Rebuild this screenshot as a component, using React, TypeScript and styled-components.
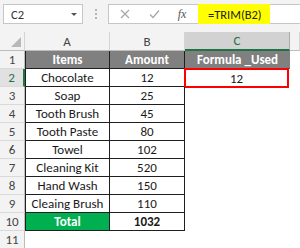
import React from 'react'
import styled, { createGlobalStyle, css } from 'styled-components'

const GlobalStyle = createGlobalStyle`
  html, body {
    margin: 0;
    padding: 0;
    background: #ffffff;
  }
  body {
    font-family: Carlito, Lato, 'Liberation Sans', sans-serif;
  }
`

const Page = styled.div`
  width: 300px;
  height: 248px;
  overflow: hidden;
  background: #ffffff;
`

const Toolbar = styled.div`
  display: flex;
  align-items: flex-start;
  height: 32px;
  padding: 4px 0 0 3px;
  box-sizing: border-box;
  background: #f3f3f3;
`

const NameBox = styled.div`
  display: flex;
  align-items: center;
  justify-content: space-between;
  width: 80px;
  height: 20px;
  padding: 0 5px 0 7px;
  box-sizing: border-box;
  background: #ffffff;
  border: 1px solid #c6c6c6;
  font-size: 12.5px;
  color: #333;
`

const Caret = styled.span`
  width: 0;
  height: 0;
  border-left: 3px solid transparent;
  border-right: 3px solid transparent;
  border-top: 3px solid #555;
`

const Grip = styled.div`
  display: flex;
  flex-direction: column;
  align-items: center;
  justify-content: center;
  gap: 2px;
  width: 25px;
  height: 20px;
  span {
    width: 2px;
    height: 2px;
    background: #b5b5b5;
  }
`

const FormulaBar = styled.div`
  flex: 1;
  display: flex;
  align-items: center;
  height: 20px;
  background: #ffffff;
  border: 1px solid #c6c6c6;
  border-right: none;
  box-sizing: border-box;
`

const BarIcon = styled.span<{ $w: number }>`
  display: flex;
  align-items: center;
  justify-content: center;
  width: ${p => p.$w}px;
  color: #a6a6a6;
`

const Fx = styled.span`
  font-family: 'Liberation Serif', serif;
  font-style: italic;
  font-size: 12px;
  color: #555;
`

const Formula = styled.div`
  display: flex;
  align-items: center;
  height: 20px;
  margin-left: 2px;
  padding: 0 8px 0 10px;
  background: #ffff00;
  font-size: 12.5px;
  color: #222;
`

const Sheet = styled.div`
  display: grid;
  grid-template-columns: 25px 85px 75px 105px 1fr;
  grid-template-rows: 19px;
  grid-auto-rows: 18px;
  font-size: 13px;
  color: #1a1a1a;
`

const Corner = styled.div`
  position: relative;
  background: #f3f3f3;
  border-right: 1px solid #d4d4d4;
  border-bottom: 1px solid #bdbdbd;
  box-sizing: border-box;
  &::after {
    content: '';
    position: absolute;
    right: 3px;
    bottom: 3px;
    border-left: 10px solid transparent;
    border-bottom: 10px solid #b8b8b8;
  }
`

const ColHead = styled.div<{ $active?: boolean }>`
  display: flex;
  align-items: center;
  justify-content: center;
  background: #f3f3f3;
  border-right: 1px solid #d4d4d4;
  border-bottom: 1px solid #bdbdbd;
  box-sizing: border-box;
  color: #444;
  ${p =>
    p.$active &&
    css`
      background: #d2d2d2;
      color: #217346;
      border-bottom: 2px solid #217346;
      border-right-color: #ababab;
    `}
`

const RowHead = styled.div<{ $active?: boolean }>`
  display: flex;
  align-items: center;
  justify-content: center;
  background: #f3f3f3;
  border-bottom: 1px solid #d9d9d9;
  border-right: 1px solid #bdbdbd;
  box-sizing: border-box;
  color: #444;
  ${p =>
    p.$active &&
    css`
      background: #e1e1e1;
      color: #217346;
      border-right: 2px solid #217346;
    `}
`

type Tone = 'plain' | 'head' | 'total'

const Cell = styled.div<{ $tone: Tone; $bold?: boolean; $first?: boolean }>`
  display: flex;
  align-items: center;
  justify-content: center;
  box-sizing: border-box;
  white-space: nowrap;
  font-weight: ${p => (p.$bold ? 700 : 400)};
  border-right: 1px solid #1f1f1f;
  border-bottom: 1px solid #1f1f1f;
  ${p =>
    p.$first &&
    css`
      border-left: 1px solid #1f1f1f;
    `}
  ${p =>
    p.$tone === 'head' &&
    css`
      background: #808080;
      color: #ffffff;
      font-weight: 700;
    `}
  ${p =>
    p.$tone === 'total' &&
    css`
      background: #00b050;
      color: #ffffff;
      font-weight: 700;
    `}
`

const HeadBand = styled.div`
  display: flex;
  align-items: center;
  justify-content: center;
  background: #808080;
  color: #ffffff;
  font-weight: 700;
  border-bottom: 1px solid #6f6f6f;
  box-sizing: border-box;
`

const Marked = styled.div`
  display: flex;
  align-items: center;
  justify-content: center;
  margin: -1px 1px -1px -1px;
  border: 2px solid #ff0000;
  background: #ffffff;
`

const Blank = styled.div``

const items: [string, number][] = [
  ['Chocolate', 12],
  ['Soap', 25],
  ['Tooth Brush', 45],
  ['Tooth Paste', 80],
  ['Towel', 102],
  ['Cleaning Kit', 520],
  ['Hand Wash', 150],
  ['Cleaing Brush', 110]
]

const CrossIcon = () => (
  <svg width='10' height='10' viewBox='0 0 10 10'>
    <path d='M1 1L9 9M9 1L1 9' stroke='#a6a6a6' strokeWidth='1.2' fill='none' />
  </svg>
)

const CheckIcon = () => (
  <svg width='11' height='10' viewBox='0 0 11 10'>
    <path d='M1 5.5L4 8.5L10 1.5' stroke='#a6a6a6' strokeWidth='1.2' fill='none' />
  </svg>
)

export default function App() {
  return (
    <Page>
      <GlobalStyle />
      <Toolbar>
        <NameBox>
          C2
          <Caret />
        </NameBox>
        <Grip>
          <span />
          <span />
          <span />
        </Grip>
        <FormulaBar>
          <BarIcon $w={31}>
            <CrossIcon />
          </BarIcon>
          <BarIcon $w={28}>
            <CheckIcon />
          </BarIcon>
          <BarIcon $w={28}>
            <Fx>fx</Fx>
          </BarIcon>
          <Formula>=TRIM(B2)</Formula>
        </FormulaBar>
      </Toolbar>
      <Sheet>
        <Corner />
        <ColHead>A</ColHead>
        <ColHead>B</ColHead>
        <ColHead $active>C</ColHead>
        <ColHead />

        <RowHead>1</RowHead>
        <Cell $tone='head' $first>Items</Cell>
        <Cell $tone='head'>Amount</Cell>
        <HeadBand>Formula _Used</HeadBand>
        <Blank />

        {items.map(([name, amount], i) => (
          <React.Fragment key={name}>
            <RowHead $active={i === 0}>{i + 2}</RowHead>
            <Cell $tone='plain' $first>{name}</Cell>
            <Cell $tone='plain'>{amount}</Cell>
            {i === 0 ? <Marked>{amount}</Marked> : <Blank />}
            <Blank />
          </React.Fragment>
        ))}

        <RowHead>10</RowHead>
        <Cell $tone='total' $first>Total</Cell>
        <Cell $tone='plain' $bold>1032</Cell>
        <Blank />
        <Blank />

        <RowHead>11</RowHead>
        <Blank />
        <Blank />
        <Blank />
        <Blank />
      </Sheet>
    </Page>
  )
}
